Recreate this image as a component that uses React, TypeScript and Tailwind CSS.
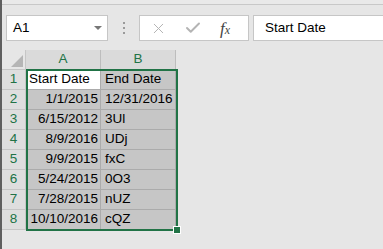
import React from 'react';
import { X, Check } from 'lucide-react';

const rows: [string, string][] = [
  ['Start Date', 'End Date'],
  ['1/1/2015', '12/31/2016'],
  ['6/15/2012', '3Ul'],
  ['8/9/2016', 'UDj'],
  ['9/9/2015', 'fxC'],
  ['5/24/2015', '0O3'],
  ['7/28/2015', 'nUZ'],
  ['10/10/2016', 'cQZ'],
];

export default function App() {
  return (
    <div
      className="w-[383px] h-[249px] overflow-hidden bg-[#e6e6e6] border-l-2 border-[#5f5f5f] text-[13.5px] text-black"
      style={{ fontFamily: '"Liberation Sans", Arial, sans-serif' }}
    >
      {/* top strip */}
      <div className="h-[5px] border-b border-[#c8c8c8] bg-[#e9e9e9]" />

      {/* formula bar */}
      <div className="flex items-center h-[26px] mt-[10px]">
        <div className="ml-[4px] w-[102px] h-full bg-white border border-[#c6c6c6] flex items-center justify-between pl-[6px] pr-[5px]">
          <span>A1</span>
          <span className="w-0 h-0 border-l-[4px] border-r-[4px] border-t-[4px] border-l-transparent border-r-transparent border-t-[#777]" />
        </div>
        <div className="w-[31px] flex flex-col items-center gap-[3px]">
          <span className="w-[2px] h-[2px] bg-[#9a9a9a]" />
          <span className="w-[2px] h-[2px] bg-[#9a9a9a]" />
          <span className="w-[2px] h-[2px] bg-[#9a9a9a]" />
        </div>
        <div className="w-[110px] h-full bg-white border border-[#c6c6c6] flex items-center pl-[10px]">
          <X className="w-[17px] h-[17px] text-[#b4b4b4]" strokeWidth={1.4} />
          <Check className="ml-[17px] w-[18px] h-[18px] text-[#b4b4b4]" strokeWidth={2.6} />
          <span
            className="ml-[18px] text-[17px] leading-none italic text-[#444]"
            style={{ fontFamily: '"Liberation Serif", serif' }}
          >
            f<span className="text-[12px]">x</span>
          </span>
        </div>
        <div className="ml-[4px] flex-1 h-full bg-white border border-[#c6c6c6] border-r-0 flex items-center pl-[11px]">
          Start Date
        </div>
      </div>

      {/* sheet */}
      <div className="relative mt-[9px] w-[174px]">
        <div className="grid grid-cols-[24px_75px_75px]">
          <div className="h-[20px] border-r border-b border-[#c6c6c6] bg-[#e6e6e6] relative">
            <svg className="absolute right-[2px] bottom-[2px]" width="12" height="12" viewBox="0 0 12 12">
              <polygon points="12,0 12,12 0,12" fill="#b5b5b5" />
            </svg>
          </div>
          <div className="h-[20px] border-r border-b border-[#bdbdbd] bg-[#dadada] text-[#217346] flex items-center justify-center">A</div>
          <div className="h-[20px] border-r border-b border-[#bdbdbd] bg-[#dadada] text-[#217346] flex items-center justify-center">B</div>
          {rows.map((r, i) => (
            <React.Fragment key={i}>
              <div className="h-[20px] border-r border-b border-[#c6c6c6] bg-[#dedede] text-[#217346] flex items-center justify-center">
                {i + 1}
              </div>
              <div
                className={`h-[20px] border-r border-b border-[#ababab] flex items-center ${
                  i === 0 ? 'bg-white justify-start pl-[3px]' : 'bg-[#c6c6c6] justify-end pr-[2px]'
                }`}
              >
                {r[0]}
              </div>
              <div className="h-[20px] border-r border-b border-[#ababab] bg-[#c6c6c6] flex items-center pl-[4px] whitespace-nowrap">
                {r[1]}
              </div>
            </React.Fragment>
          ))}
        </div>
        {/* selection */}
        <div className="absolute left-[24px] top-[19px] w-[152px] h-[162px] border-2 border-[#217346] pointer-events-none">
          <div className="absolute -right-[5px] -bottom-[5px] w-[8px] h-[8px] bg-[#217346] border border-white" />
        </div>
      </div>
    </div>
  );
}
